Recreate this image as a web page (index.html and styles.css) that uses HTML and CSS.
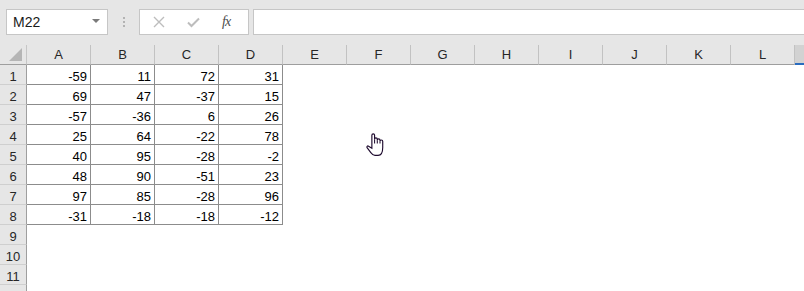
FILE: index.html
```html
<!DOCTYPE html>
<html>
<head>
<meta charset="utf-8">
<link rel="stylesheet" href="styles.css">
</head>
<body>
<div class="toolbar">
  <div class="namebox"><span class="name">M22</span><span class="arrow"></span></div>
  <div class="sep"><i></i><i></i><i></i></div>
  <div class="fxbox">
    <svg class="btn x" width="12" height="12" viewBox="0 0 12 12"><path d="M1 1L11 11M11 1L1 11" stroke="#bdbdbd" stroke-width="1.4" fill="none"/></svg>
    <svg class="btn ok" width="13" height="11" viewBox="0 0 13 11"><path d="M1 5.5L4.5 9L12 1.5" stroke="#bdbdbd" stroke-width="2" fill="none"/></svg>
    <span class="fx">fx</span>
  </div>
  <div class="formula"></div>
</div>
<div class="sheet">
  <div class="corner"><svg width="14" height="13" viewBox="0 0 14 13"><path d="M0 13L13 13L13 0Z" fill="#b5b5b5"/></svg></div>
  <div class="ch">A</div><div class="ch">B</div><div class="ch">C</div><div class="ch">D</div>
  <div class="ch">E</div><div class="ch">F</div><div class="ch">G</div><div class="ch">H</div>
  <div class="ch">I</div><div class="ch">J</div><div class="ch">K</div><div class="ch">L</div>
  <div class="ch sel"></div>

  <div class="rh">1</div><div class="c">-59</div><div class="c">11</div><div class="c">72</div><div class="c">31</div><div class="rest"></div>
  <div class="rh">2</div><div class="c">69</div><div class="c">47</div><div class="c">-37</div><div class="c">15</div><div class="rest"></div>
  <div class="rh">3</div><div class="c">-57</div><div class="c">-36</div><div class="c">6</div><div class="c">26</div><div class="rest"></div>
  <div class="rh">4</div><div class="c">25</div><div class="c">64</div><div class="c">-22</div><div class="c">78</div><div class="rest"></div>
  <div class="rh">5</div><div class="c">40</div><div class="c">95</div><div class="c">-28</div><div class="c">-2</div><div class="rest"></div>
  <div class="rh">6</div><div class="c">48</div><div class="c">90</div><div class="c">-51</div><div class="c">23</div><div class="rest"></div>
  <div class="rh">7</div><div class="c">97</div><div class="c">85</div><div class="c">-28</div><div class="c">96</div><div class="rest"></div>
  <div class="rh">8</div><div class="c">-31</div><div class="c">-18</div><div class="c">-18</div><div class="c">-12</div><div class="rest"></div>
  <div class="rh">9</div><div class="empty"></div>
  <div class="rh">10</div><div class="empty"></div>
  <div class="rh">11</div><div class="empty"></div>
  <div class="rh"></div><div class="empty"></div>

  <svg class="cursor" width="20" height="24" viewBox="0 0 18 23">
    <path d="M6 14.5V2.2A1.3 1.3 0 0 1 8.6 2.2V6A1.3 1.3 0 0 1 11.2 6V7A1.3 1.3 0 0 1 13.8 7V8A1.3 1.3 0 0 1 16.4 8V14C16.4 18.5 14.8 21.5 12 21.5H9C7.3 21.5 6.3 20.5 5 18.8L1.4 14C0.8 13.2 1.8 12 2.8 12.6L6 14.5Z" fill="#fff" stroke="#1e0a2e" stroke-width="1.1"/>
    <path d="M8.6 6V10M11.2 7V10M13.8 8V10" stroke="#1e0a2e" stroke-width="1" fill="none"/>
  </svg>
</div>
</body>
</html>
```

FILE: styles.css
```css
html, body {
  margin: 0;
  padding: 0;
  background: #fff;
  overflow: hidden;
  font-family: "Liberation Sans", Arial, sans-serif;
  font-size: 13px;
  color: #000;
}

.toolbar {
  height: 45px;
  box-sizing: border-box;
  background: #e6e6e6;
  display: flex;
  align-items: flex-start;
  padding: 9px 0 0 6px;
}

.namebox {
  width: 102px;
  height: 26px;
  box-sizing: border-box;
  border: 1px solid #c6c6c6;
  background: #fff;
  display: flex;
  align-items: center;
  justify-content: space-between;
  padding: 0 7px 0 6px;
}

.name {
  font-size: 14px;
  color: #1a1a1a;
}

.arrow {
  width: 0;
  height: 0;
  border-left: 4px solid transparent;
  border-right: 4px solid transparent;
  border-top: 4px solid #7a7a7a;
  margin-top: -2px;
}

.sep {
  width: 31px;
  height: 26px;
  display: flex;
  flex-direction: column;
  align-items: center;
  justify-content: center;
  gap: 2px;
}

.sep i {
  width: 2px;
  height: 2px;
  background: #b3b3b3;
}

.fxbox {
  width: 110px;
  height: 26px;
  box-sizing: border-box;
  border: 1px solid #c6c6c6;
  background: #fff;
  display: flex;
  align-items: center;
  padding-left: 13px;
}

.btn.x { margin-right: 22px; }
.btn.ok { margin-right: 22px; }

.fx {
  font-family: "Liberation Serif", "Times New Roman", serif;
  font-style: italic;
  font-size: 14px;
  color: #4d4d4d;
  letter-spacing: -1px;
}

.formula {
  flex: 1;
  height: 26px;
  box-sizing: border-box;
  border: 1px solid #c6c6c6;
  border-right: none;
  background: #fff;
  margin-left: 4px;
}

.sheet {
  position: relative;
  display: grid;
  grid-template-columns: 27px repeat(12, 64px) 1fr;
  grid-auto-rows: 20px;
  grid-template-rows: 20px;
}

.corner {
  background: #e6e6e6;
  border-right: 1px solid #c6c6c6;
  border-bottom: 1px solid #9e9e9e;
  box-sizing: border-box;
  display: flex;
  align-items: flex-end;
  justify-content: flex-end;
  padding: 0 3px 3px 0;
}

.corner svg { display: block; }

.ch {
  background: #e6e6e6;
  border-right: 1px solid #c2c2c2;
  border-bottom: 1px solid #9e9e9e;
  box-sizing: border-box;
  text-align: center;
  line-height: 19px;
  color: #262626;
}

.ch.sel {
  background: #d2d2d2;
  border-right: none;
  border-bottom: 2px solid #2a6cbf;
}

.rh {
  background: #e6e6e6;
  border-right: 1px solid #9e9e9e;
  border-bottom: 1px solid #cfcfcf;
  box-sizing: border-box;
  text-align: center;
  line-height: 14px;
  padding-top: 5px;
  color: #262626;
}

.c {
  border-right: 1px solid #8c8c8c;
  border-bottom: 1px solid #8c8c8c;
  box-sizing: border-box;
  text-align: right;
  padding: 5px 3px 0 0;
  line-height: 14px;
}

.rest { grid-column: span 9; }
.empty { grid-column: span 13; }

.cursor {
  position: absolute;
  left: 365px;
  top: 88px;
}
```
